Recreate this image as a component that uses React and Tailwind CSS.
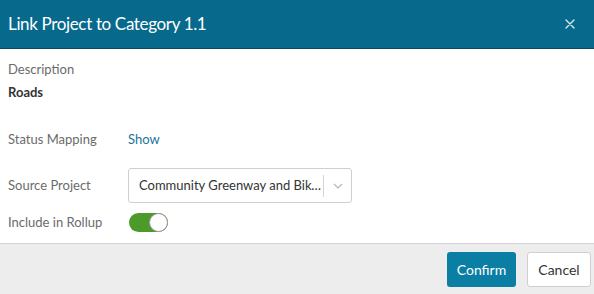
import React, { useState } from 'react';

const App = () => {
  const [rollup, setRollup] = useState(true);

  return (
    <div className="w-[594px] h-[294px] flex flex-col bg-white font-['Lato',sans-serif] overflow-hidden">
      {/* Header */}
      <div className="h-[49px] shrink-0 bg-[#076a8c] border-b border-[#0b4a60] flex items-center justify-between pl-2 pr-[16px]">
        <h1 className="text-[17px] text-white tracking-[-0.35px]">Link Project to Category 1.1</h1>
        <button className="text-[#d8e8ef] w-4 h-4 flex items-center justify-center">
          <svg width="10" height="10" viewBox="0 0 10 10">
            <path d="M1 1L9 9M9 1L1 9" stroke="currentColor" strokeWidth="1.4" strokeLinecap="round" />
          </svg>
        </button>
      </div>

      {/* Body */}
      <div className="flex-1 px-2 pt-[12px] text-[13px]">
        <div className="text-[#6b6b6b] leading-[16px]">Description</div>
        <div className="text-[#333] font-bold leading-[16px] mt-[7px]">Roads</div>

        <div className="flex items-center h-[20px] mt-[30px]">
          <div className="w-[120px] text-[#6b6b6b]">Status Mapping</div>
          <a className="text-[#1d7398] cursor-pointer">Show</a>
        </div>

        <div className="flex items-center mt-[18px]">
          <div className="w-[120px] text-[#6b6b6b]">Source Project</div>
          <div className="w-[224px] h-[35px] border border-[#cfcfcf] rounded-[3px] flex items-center">
            <div className="flex-1 pl-[10px] text-[#333] truncate">Community Greenway and Bike Path</div>
            <div className="w-px h-[22px] bg-[#d4d4d4]" />
            <div className="w-[27px] flex items-center justify-center text-[#b3b3b3]">
              <svg width="10" height="6" viewBox="0 0 10 6">
                <path d="M1 1L5 5L9 1" stroke="currentColor" strokeWidth="1.1" fill="none" />
              </svg>
            </div>
          </div>
        </div>

        <div className="flex items-center mt-[10px]">
          <div className="w-[121px] text-[#6b6b6b]">Include in Rollup</div>
          <button
            onClick={() => setRollup((p) => !p)}
            className={`relative w-[39px] h-[19px] rounded-full ${rollup ? 'bg-[#4c9a2a]' : 'bg-[#ccc]'}`}
          >
            <span
              className={`absolute top-0 w-[19px] h-[19px] rounded-full bg-white border border-[#9a9a9a] ${rollup ? 'right-0' : 'left-0'}`}
            />
          </button>
        </div>
      </div>

      {/* Footer */}
      <div className="h-[51px] shrink-0 bg-[#ededed] border-t border-[#d3d2dc] flex items-center justify-end gap-[11px] pr-[3px]">
        <button className="w-[69px] h-[35px] rounded-[3px] bg-[#0b7ea4] text-white text-[14px]">Confirm</button>
        <button className="w-[64px] h-[35px] rounded-[3px] bg-white border border-[#cfcfcf] text-[#333] text-[14px]">Cancel</button>
      </div>
    </div>
  );
};

export default App;
